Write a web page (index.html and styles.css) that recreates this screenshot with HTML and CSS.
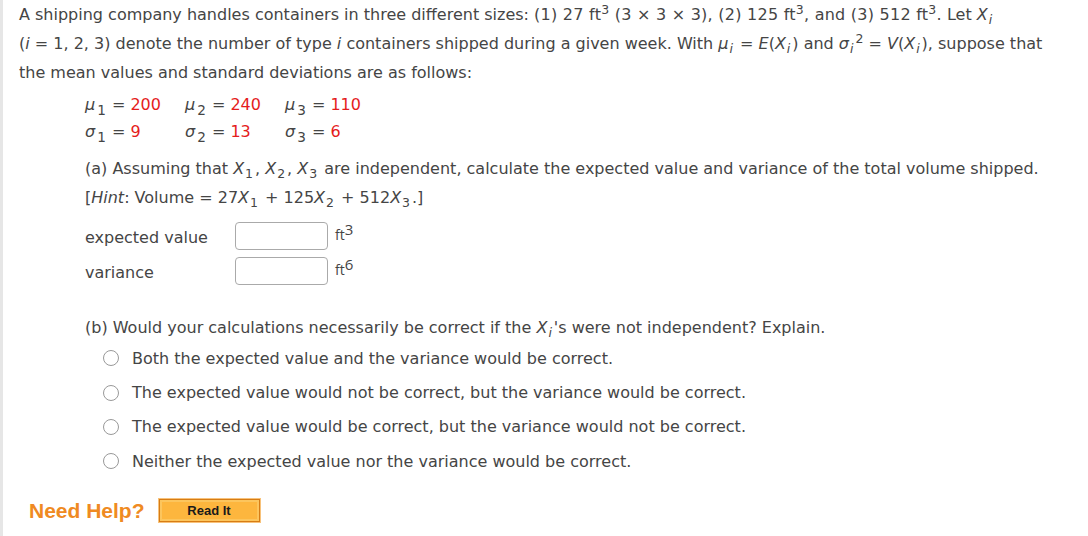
FILE: index.html
```html
<!DOCTYPE html>
<html>
<head>
<meta charset="utf-8">
<link rel="stylesheet" href="styles.css">
</head>
<body>
<div class="page">
  <p class="intro">A shipping company handles containers in three different sizes: <span class="nums">(1) 27 ft<sup>3</sup> (3 × 3 × 3), (2) 125 ft<sup>3</sup>, and (3) 512 ft<sup>3</sup>.</span> Let <i>X<sub>i</sub></i><br>(<i>i</i> = 1, 2, 3) denote the number of type <i>i</i> containers shipped during a given week. With <i>μ<sub>i</sub></i> = <i>E</i>(<i>X<sub>i</sub></i>) and <i>σ<sub>i</sub></i><sup>2</sup> = <i>V</i>(<i>X<sub>i</sub></i>), suppose that<br>the mean values and standard deviations are as follows:</p>

  <div class="indent">
    <div class="params">
      <span><i>μ</i><sub>1</sub> = <b class="red">200</b></span>
      <span><i>μ</i><sub>2</sub> = <b class="red">240</b></span>
      <span><i>μ</i><sub>3</sub> = <b class="red">110</b></span>
      <span><i>σ</i><sub>1</sub> = <b class="red">9</b></span>
      <span><i>σ</i><sub>2</sub> = <b class="red">13</b></span>
      <span><i>σ</i><sub>3</sub> = <b class="red">6</b></span>
    </div>

    <p class="part-a">(a) Assuming that <i>X</i><sub>1</sub>, <i>X</i><sub>2</sub>, <i>X</i><sub>3</sub> are independent, calculate the expected value and variance of the total volume shipped.<br>[<i>Hint</i>: Volume = 27<i>X</i><sub>1</sub> + 125<i>X</i><sub>2</sub> + 512<i>X</i><sub>3</sub>.]</p>

    <div class="answers">
      <div class="answer-row">
        <span class="label">expected value</span>
        <span class="box"></span>
        <span class="unit">ft<sup>3</sup></span>
      </div>
      <div class="answer-row">
        <span class="label">variance</span>
        <span class="box"></span>
        <span class="unit">ft<sup>6</sup></span>
      </div>
    </div>

    <p class="part-b">(b) Would your calculations necessarily be correct if the <i>X<sub>i</sub></i>'s were not independent? Explain.</p>
    <ul class="options">
      <li><span class="radio"></span>Both the expected value and the variance would be correct.</li>
      <li><span class="radio"></span>The expected value would not be correct, but the variance would be correct.</li>
      <li><span class="radio"></span>The expected value would be correct, but the variance would not be correct.</li>
      <li><span class="radio"></span>Neither the expected value nor the variance would be correct.</li>
    </ul>
  </div>

  <div class="help">
    <span class="need">Need Help?</span>
    <span class="read-it">Read It</span>
  </div>
</div>
</body>
</html>
```
FILE: styles.css
```css
html, body {
  margin: 0;
  padding: 0;
  background: #ffffff;
}
.page {
  border-left: 3px solid #e6e6e6;
  min-height: 536px;
  box-sizing: border-box;
  padding: 0 0 0 16px;
  font-family: "DejaVu Sans", Verdana, sans-serif;
  font-size: 16px;
  color: #454545;
}
sup, sub {
  font-size: 0.78em;
  line-height: 0;
}
sub {
  vertical-align: -0.35em;
  margin: 0 2px 0 1px;
}
i {
  font-style: italic;
}
.nums {
  letter-spacing: 0.25px;
}
.intro {
  margin: 0;
  line-height: 29px;
  white-space: nowrap;
}
.indent {
  padding-left: 66px;
}
.params {
  display: grid;
  grid-template-columns: 100px 100px 100px;
  row-gap: 2px;
  margin-top: 5px;
  line-height: 25px;
}
.params sub {
  font-size: 0.85em;
  margin: 0 1px 0 2px;
}
.red {
  color: #e51c1c;
  font-weight: normal;
}
.part-a {
  margin: 10px 0 0 0;
  line-height: 29px;
  white-space: nowrap;
}
.answers {
  margin-top: 10px;
  display: flex;
  flex-direction: column;
  gap: 7px;
}
.answer-row {
  display: flex;
  align-items: center;
}
.label {
  width: 150px;
  padding-top: 2px;
}
.box {
  width: 91px;
  height: 26px;
  border: 1px solid #aaaaaa;
  border-radius: 4px;
  background: #fff;
}
.unit {
  margin-left: 7px;
  align-self: flex-start;
  font-family: "Open Sans", sans-serif;
  font-size: 14px;
  line-height: 26px;
}
.unit sup {
  font-size: 15px;
  vertical-align: 5px;
  margin: 0;
}
.part-b {
  margin: 30px 0 0 0;
  line-height: 26px;
}
.options {
  list-style: none;
  margin: 0;
  padding: 0 0 0 18px;
}
.options li {
  display: flex;
  align-items: center;
  height: 34.4px;
}
.radio {
  width: 16px;
  height: 16px;
  border: 1.8px solid #999999;
  border-radius: 50%;
  box-sizing: border-box;
  margin-right: 13px;
  flex: none;
}
.help {
  display: flex;
  align-items: center;
  margin-top: 20px;
  padding-left: 10px;
  gap: 14px;
}
.need {
  font-family: "Liberation Sans", Arial, sans-serif;
  font-weight: bold;
  font-size: 21px;
  color: #ef8a22;
}
.read-it {
  display: inline-block;
  width: 99px;
  height: 21px;
  border: 1px solid #d77c14;
  box-shadow: inset 0 0 0 2px #fcc55d;
  background: #fdb63e;
  outline: 1px solid #f8c27a;
  font-family: "Liberation Sans", Arial, sans-serif;
  font-weight: bold;
  font-size: 13px;
  color: #1a1a1a;
  text-align: center;
  line-height: 21px;
}
```
